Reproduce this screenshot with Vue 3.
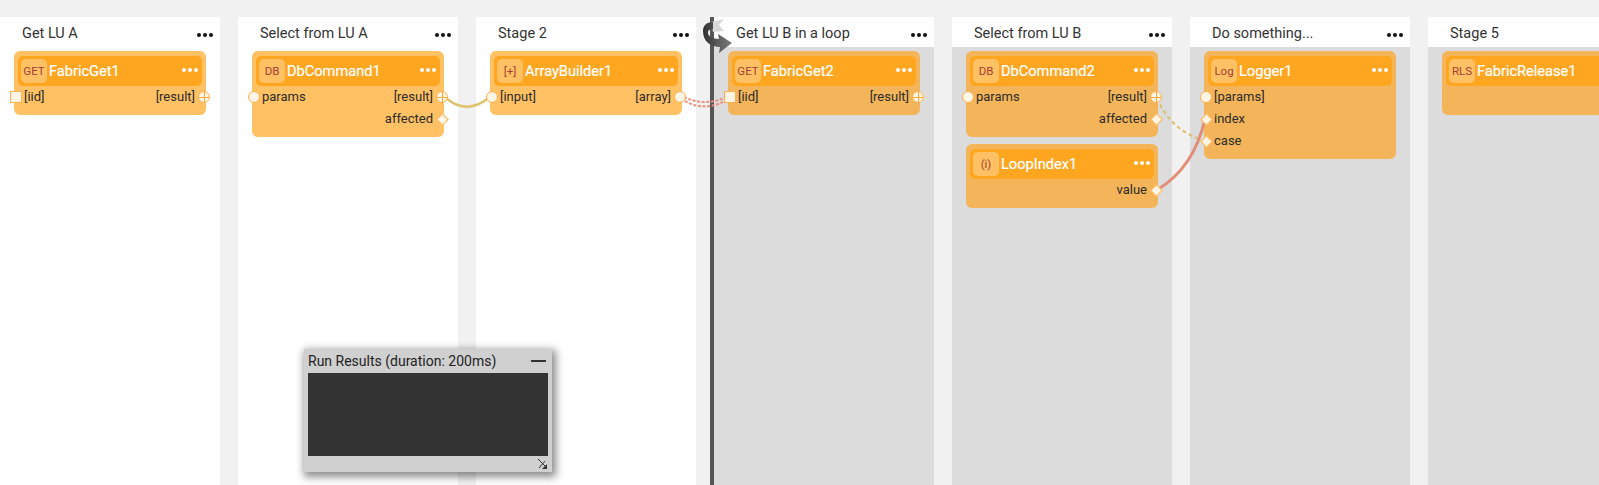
<script setup>
const stages = [
  { title: 'Get LU A', nodes: [
    { icon: 'GET', name: 'FabricGet1', rows: [{ l: '[iid]', lp: 'square', r: '[result]', rp: 'cross' }] },
  ] },
  { title: 'Select from LU A', nodes: [
    { icon: 'DB', name: 'DbCommand1', rows: [
      { l: 'params', lp: 'circle', r: '[result]', rp: 'cross' },
      { r: 'affected', rp: 'diamond' },
    ] },
  ] },
  { title: 'Stage 2', nodes: [
    { icon: '[+]', name: 'ArrayBuilder1', rows: [{ l: '[input]', lp: 'circle', r: '[array]', rp: 'circle' }] },
  ] },
  { title: 'Get LU B in a loop', loop: true, nodes: [
    { icon: 'GET', name: 'FabricGet2', rows: [{ l: '[iid]', lp: 'square', r: '[result]', rp: 'cross' }] },
  ] },
  { title: 'Select from LU B', loop: true, nodes: [
    { icon: 'DB', name: 'DbCommand2', rows: [
      { l: 'params', lp: 'circle', r: '[result]', rp: 'cross' },
      { r: 'affected', rp: 'diamond' },
    ] },
    { icon: '(i)', name: 'LoopIndex1', rows: [{ r: 'value', rp: 'diamond' }] },
  ] },
  { title: 'Do something...', loop: true, nodes: [
    { icon: 'Log', name: 'Logger1', rows: [
      { l: '[params]', lp: 'circle' },
      { l: 'index', lp: 'diamond' },
      { l: 'case', lp: 'diamond' },
    ] },
  ] },
  { title: 'Stage 5', loop: true, nodes: [
    { icon: 'RLS', name: 'FabricRelease1', rows: [{}] },
  ] },
]
</script>

<template>
  <div class="board">
    <section v-for="s in stages" :key="s.title" class="stage" :class="{ loop: s.loop }">
      <header class="stage-head">
        <span class="stage-title">{{ s.title }}</span>
        <span class="dots dark"><i></i><i></i><i></i></span>
      </header>
      <div class="stage-body">
        <article v-for="n in s.nodes" :key="n.name" class="node">
          <div class="node-head">
            <span class="node-icon">{{ n.icon }}</span>
            <span class="node-name">{{ n.name }}</span>
            <span class="dots light"><i></i><i></i><i></i></span>
          </div>
          <div class="node-rows">
            <div v-for="(r, i) in n.rows" :key="i" class="row">
              <span v-if="r.lp" class="port left" :class="r.lp"></span>
              <span class="lbl">{{ r.l }}</span>
              <span class="lbl">{{ r.r }}</span>
              <span v-if="r.rp" class="port right" :class="r.rp"></span>
            </div>
          </div>
        </article>
      </div>
    </section>

    <div class="loop-line"></div>

    <svg class="overlay" width="1599" height="485" viewBox="0 0 1599 485" fill="none">
      <path d="M446 98 C460 110 474 110 490 97" stroke="#e0c36e" stroke-width="2.5" />
      <path d="M684 97 C696 103 710 104 724 98" stroke="#ee8e7e" stroke-width="2" stroke-dasharray="3 1.6" />
      <path d="M685 101 C696 108 711 108 723 102" stroke="#ee8e7e" stroke-width="2" stroke-dasharray="3 1.6" />
      <path d="M1157 98 C1166 120 1182 134 1205 141" stroke="#dcbf68" stroke-width="2" stroke-dasharray="4 3" />
      <path d="M1157 190 C1182 175 1198 150 1205 119" stroke="#e28d78" stroke-width="3" />
      <defs>
        <linearGradient id="arrowShade" x1="0" y1="0" x2="1" y2="0">
          <stop offset="0" stop-color="#303030" />
          <stop offset=".5" stop-color="#5c5c5c" />
          <stop offset="1" stop-color="#7a7a7a" />
        </linearGradient>
      </defs>
      <path d="M711 22 L724 19 L719 25 L724 31 L713 32 Z" fill="#d8d8d8" />
      <path d="M713 22 C706 22 703 26 703 31 C703 41 710 47 720 47 L719 53 L732 43 L718 34 L719 39 C713 39 708 36 708 33 C708 30 710 29 713 29 Z" fill="url(#arrowShade)" />
    </svg>

    <aside class="results">
      <div class="results-head">
        <span>Run Results (duration: 200ms)</span>
        <span class="minimize"></span>
      </div>
      <div class="results-body"></div>
      <div class="results-foot">
        <svg width="10" height="11" viewBox="0 0 10 11" fill="none">
          <path d="M0 0 L9 9 M1 9 L7 2" stroke="#333" stroke-width="1" />
          <path d="M9 5 V10 H4 Z" fill="#333" />
        </svg>
      </div>
    </aside>
  </div>
</template>

<style>
html, body { margin: 0; height: 100%; overflow: hidden; background: #f1f1f1; }
</style>

<style scoped>
.board {
  position: relative;
  display: flex;
  gap: 18px;
  width: 1599px;
  height: 485px;
  padding-top: 17px;
  box-sizing: border-box;
  overflow: hidden;
  background: #f1f1f1;
  font-family: Roboto, sans-serif;
  color: #222;
}
.stage {
  flex: 0 0 220px;
  display: flex;
  flex-direction: column;
  background: #fff;
}
.stage-head {
  flex: 0 0 30px;
  display: flex;
  align-items: center;
  justify-content: space-between;
  padding: 0 7px 0 22px;
  background: #fff;
  font-size: 14.5px;
  box-sizing: border-box;
}
.stage-title { position: relative; top: 1px; color: #333; }
.stage-body {
  flex: 1;
  display: flex;
  flex-direction: column;
  gap: 7px;
  padding: 4px 14px 0;
}
.loop .stage-body { background: #dcdcdc; }
.dots { display: inline-flex; gap: 2px; }
.dots i { width: 4px; height: 4px; border-radius: 50%; }
.dots.dark { margin-top: 5px; }
.dots.dark i { background: #111; }
.dots.light i { background: #fff; }
.node {
  background: #ffc164;
  border-radius: 6px;
  padding: 5px 4px 7px;
}
.loop .node { background: #f4b55a; }
.node-head {
  display: flex;
  align-items: center;
  height: 30px;
  padding: 0 3px;
  background: #ffa620;
  border-radius: 5px;
  box-sizing: border-box;
}
.node-icon {
  flex: 0 0 26px;
  height: 24px;
  display: flex;
  align-items: center;
  justify-content: center;
  background: #ffc164;
  border-radius: 5px;
  color: #a33f35;
  font-size: 11.5px;
}
.node-name {
  flex: 1;
  margin-left: 2px;
  color: #fff;
  font-size: 14.6px;
  font-weight: 400;
  -webkit-text-stroke: 0.2px #fff;
}
.dots.light { margin-right: 1px; margin-top: -2px; }
.node-rows { display: flex; flex-direction: column; }
.row {
  position: relative;
  display: flex;
  align-items: center;
  justify-content: space-between;
  height: 22px;
  padding: 0 7px 0 6px;
  font-size: 13px;
  color: #2b2b2b;
}
.lbl { white-space: nowrap; position: relative; top: -1px; }
.port {
  position: absolute;
  z-index: 2;
  top: 5px;
  box-sizing: border-box;
  width: 12px;
  height: 12px;
  background: #fff5e6;
  border: 1px solid #ffb04a;
}
.port.left { left: -8px; }
.port.right { right: -8px; }
.port.circle { border-radius: 50%; }
.port.cross {
  border-radius: 50%;
  background:
    linear-gradient(#ffa93a, #ffa93a) center / 100% 1px no-repeat,
    linear-gradient(#ffa93a, #ffa93a) center / 1px 100% no-repeat,
    #fff5e6;
}
.port.diamond {
  width: 9px;
  height: 9px;
  top: 6.5px;
  transform: rotate(45deg);
}
.port.diamond.right { right: -6.5px; }
.port.diamond.left { left: -6.5px; }
.loop-line {
  position: absolute;
  left: 710px;
  top: 17px;
  bottom: 0;
  width: 4px;
  background: #555;
}
.overlay {
  position: absolute;
  left: 0;
  top: 0;
  pointer-events: none;
}
.results {
  position: absolute;
  z-index: 3;
  left: 304px;
  top: 349px;
  width: 248px;
  height: 123px;
  display: flex;
  flex-direction: column;
  box-sizing: border-box;
  padding: 0 4px;
  background: #d0d0d0;
  box-shadow: 2px 3px 8px 2px rgba(0, 0, 0, .45);
}
.results-head {
  flex: 0 0 24px;
  display: flex;
  align-items: center;
  justify-content: space-between;
  font-size: 14px;
  color: #222;
}
.minimize {
  width: 15px;
  height: 2px;
  background: #333;
  margin-right: 2px;
}
.results-body { flex: 0 0 83px; background: #333; }
.results-foot {
  flex: 1;
  display: flex;
  justify-content: flex-end;
  align-items: center;
}
</style>
